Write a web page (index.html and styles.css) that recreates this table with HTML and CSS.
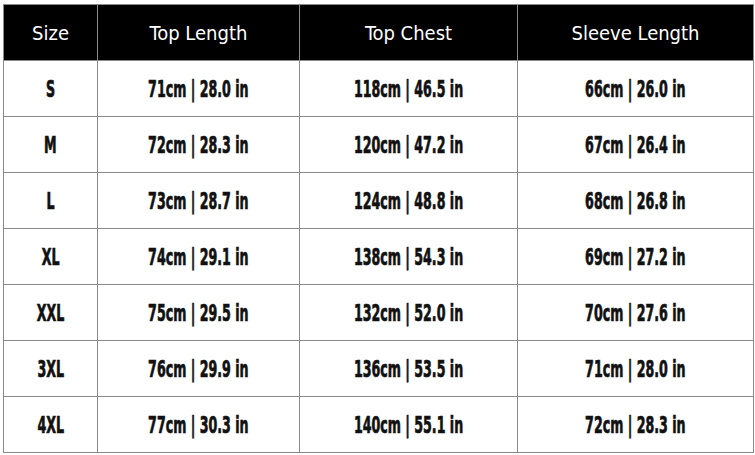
FILE: index.html
```html
<!DOCTYPE html>
<html>
<head>
<meta charset="utf-8">
<link rel="stylesheet" href="styles.css">
</head>
<body>
<table class="size-table">
  <colgroup>
    <col class="c1"><col class="c2"><col class="c3"><col class="c4">
  </colgroup>
  <thead>
    <tr><th>Size</th><th>Top Length</th><th>Top Chest</th><th>Sleeve Length</th></tr>
  </thead>
  <tbody>
    <tr><td><span>S</span></td><td><span>71cm | 28.0 in</span></td><td><span>118cm | 46.5 in</span></td><td><span>66cm | 26.0 in</span></td></tr>
    <tr><td><span>M</span></td><td><span>72cm | 28.3 in</span></td><td><span>120cm | 47.2 in</span></td><td><span>67cm | 26.4 in</span></td></tr>
    <tr><td><span>L</span></td><td><span>73cm | 28.7 in</span></td><td><span>124cm | 48.8 in</span></td><td><span>68cm | 26.8 in</span></td></tr>
    <tr><td><span>XL</span></td><td><span>74cm | 29.1 in</span></td><td><span>138cm | 54.3 in</span></td><td><span>69cm | 27.2 in</span></td></tr>
    <tr><td><span>XXL</span></td><td><span>75cm | 29.5 in</span></td><td><span>132cm | 52.0 in</span></td><td><span>70cm | 27.6 in</span></td></tr>
    <tr><td><span>3XL</span></td><td><span>76cm | 29.9 in</span></td><td><span>136cm | 53.5 in</span></td><td><span>71cm | 28.0 in</span></td></tr>
    <tr><td><span>4XL</span></td><td><span>77cm | 30.3 in</span></td><td><span>140cm | 55.1 in</span></td><td><span>72cm | 28.3 in</span></td></tr>
  </tbody>
</table>
</body>
</html>
```
FILE: styles.css
```css
html, body { background: #fff; }
body { margin: 4px 0 0 3px; }
.size-table {
  border-collapse: collapse;
  width: 750px;
  table-layout: fixed;
}
.c1 { width: 94px; }
.c2 { width: 202px; }
.c3 { width: 218px; }
.c4 { width: 236px; }
.size-table th, .size-table td {
  border: 1px solid #8a8a8a;
  height: 55px;
  padding: 0;
  text-align: center;
  vertical-align: middle;
}
.size-table th {
  background: #000;
  color: #fff;
  font-family: "DejaVu Sans", Verdana, sans-serif;
  font-stretch: semi-condensed;
  font-weight: normal;
  font-size: 20px;
  line-height: 20px;
}
.size-table td {
  color: #111;
  font-family: "DejaVu Sans", sans-serif;
  font-stretch: condensed;
  font-weight: bold;
  font-size: 23px;
  line-height: 24px;
  white-space: nowrap;
}
.size-table td span {
  display: inline-block;
  transform: scaleX(0.61);
  -webkit-text-stroke: 0.7px #111;
}
```
